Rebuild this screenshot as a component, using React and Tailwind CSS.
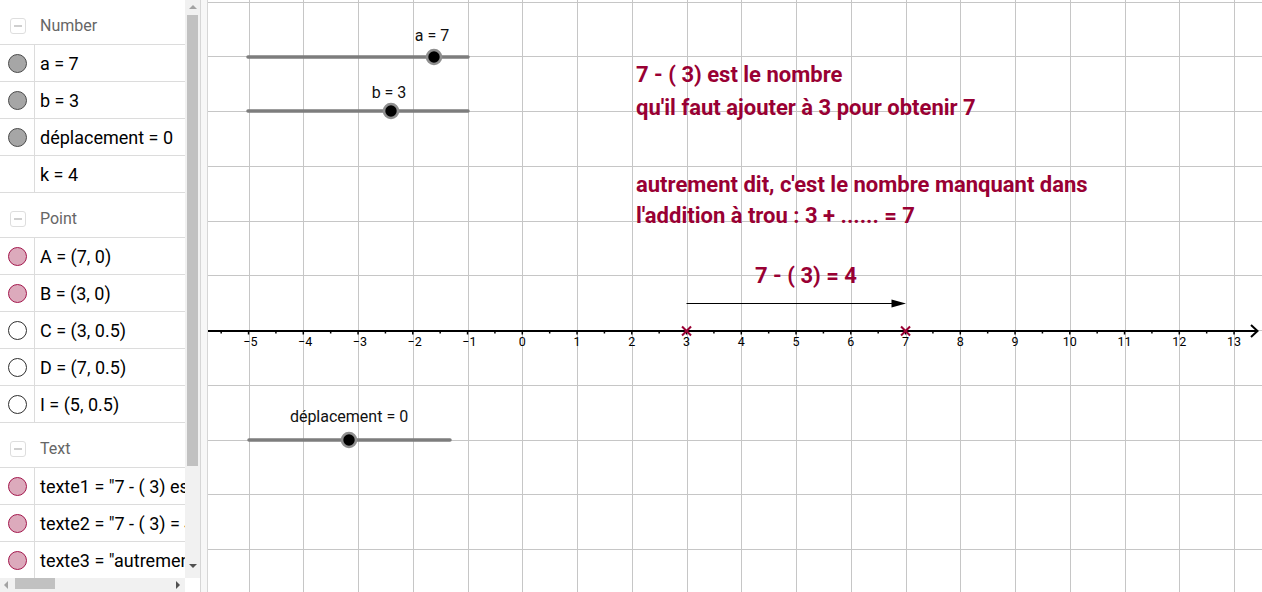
import React from 'react';

const ORIGIN_X = 522.3;
const ORIGIN_Y = 331;
const UNIT = 54.75;

const sections = [
  {
    title: 'Number',
    items: [
      { label: 'a = 7', dot: 'gray' },
      { label: 'b = 3', dot: 'gray' },
      { label: 'déplacement = 0', dot: 'gray' },
      { label: 'k = 4', dot: null },
    ],
  },
  {
    title: 'Point',
    items: [
      { label: 'A = (7, 0)', dot: 'pink' },
      { label: 'B = (3, 0)', dot: 'pink' },
      { label: 'C = (3, 0.5)', dot: 'white' },
      { label: 'D = (7, 0.5)', dot: 'white' },
      { label: 'I = (5, 0.5)', dot: 'white' },
    ],
  },
  {
    title: 'Text',
    items: [
      { label: 'texte1 = "7 - ( 3) est le nombre', dot: 'pink' },
      { label: 'texte2 = "7 - ( 3) = 4"', dot: 'pink' },
      { label: 'texte3 = "autrement dit', dot: 'pink' },
    ],
  },
];

const dotClass = {
  gray: 'bg-[#a6a6a6] border-[#4a4a4a]',
  pink: 'bg-[#dcaabc] border-[#a3174c]',
  white: 'bg-white border-[#2e2e2e]',
};

function MinusBox() {
  return (
    <div className="w-4 h-4 rounded-[3px] border border-[#dedede] flex items-center justify-center">
      <div className="w-[8px] h-[2px] bg-[#cfcfcf]" />
    </div>
  );
}

function AlgebraList() {
  return (
    <div className="w-[185px] h-[578px] overflow-hidden bg-white">
      {sections.map((s) => (
        <div key={s.title}>
          <div className="h-[45px] pt-[7px] border-b border-[#dcdcdc] flex items-center">
            <div className="w-[35px] flex justify-center pl-px">
              <MinusBox />
            </div>
            <span className="pl-[5px] text-[16px] text-[#666]">{s.title}</span>
          </div>
          {s.items.map((it) => (
            <div key={it.label} className="h-[37px] border-b border-[#dcdcdc] flex">
              <div className="w-[35px] shrink-0 border-r border-[#dcdcdc] flex items-center justify-center">
                {it.dot && <div className={`w-[19px] h-[19px] rounded-full border ${dotClass[it.dot]}`} />}
              </div>
              <div className="pl-[5px] flex items-center whitespace-nowrap text-[18px] text-black">
                {it.label}
              </div>
            </div>
          ))}
        </div>
      ))}
    </div>
  );
}

function Slider({ x1, x2, y, knob, label, labelX, labelY }) {
  return (
    <g>
      <line x1={x1} y1={y} x2={x2} y2={y} stroke="#7d7d7d" strokeWidth="3.5" strokeLinecap="round" />
      <circle cx={knob} cy={y} r="7" fill="#000" stroke="#8f8f8f" strokeWidth="2.6" />
      <text x={labelX} y={labelY} fontSize="16" fill="#111" textAnchor="middle">{label}</text>
    </g>
  );
}

function Graphics() {
  const xs = [];
  for (let k = -5; k <= 13; k++) xs.push(k);
  const ys = [];
  for (let j = -6; j <= 4; j++) ys.push(j);
  const halves = [];
  for (let k = -6; k <= 13; k++) halves.push(k + 0.5);
  const red = '#990033';

  return (
    <svg className="block" width="1054" height="592" viewBox="208 0 1054 592" style={{ fontFamily: 'Roboto, sans-serif' }}>
      {/* grid */}
      {xs.map((k) => {
        const x = Math.round(ORIGIN_X + k * UNIT) + 0.5;
        return <line key={'v' + k} x1={x} y1="0" x2={x} y2="592" stroke="#c6c6c6" strokeWidth="1" />;
      })}
      {ys.map((j) => {
        const y = Math.round(ORIGIN_Y + j * UNIT) - 0.5;
        return <line key={'h' + j} x1="208" y1={y} x2="1262" y2={y} stroke="#c6c6c6" strokeWidth="1" />;
      })}

      {/* x axis */}
      <line x1="208" y1={ORIGIN_Y} x2="1257" y2={ORIGIN_Y} stroke="#000" strokeWidth="2" />
      <polyline points="1251,325 1257.5,331 1251,337" fill="none" stroke="#000" strokeWidth="2" />
      {xs.map((k) => {
        const x = ORIGIN_X + k * UNIT;
        return <line key={'t' + k} x1={x} y1={ORIGIN_Y} x2={x} y2={ORIGIN_Y + 3.5} stroke="#000" strokeWidth="1.5" />;
      })}
      {halves.map((k) => {
        const x = ORIGIN_X + k * UNIT;
        if (x < 210 || x > 1250) return null;
        return <line key={'m' + k} x1={x} y1={ORIGIN_Y} x2={x} y2={ORIGIN_Y + 2.5} stroke="#000" strokeWidth="1.5" />;
      })}
      {xs.map((k) => {
        const x = ORIGIN_X + k * UNIT + (k < 0 ? 1.8 : 0);
        return (
          <text key={'l' + k} x={x} y="346" fontSize="12.5" fill="#000" textAnchor="middle">
            {k < 0 ? '\u2212' + -k : k}
          </text>
        );
      })}

      {/* sliders */}
      <Slider x1={248} x2={468} y={57} knob={434} label="a = 7" labelX={432} labelY={41} />
      <Slider x1={248} x2={468} y={111} knob={391} label="b = 3" labelX={389} labelY={98} />
      <Slider x1={249} x2={450} y={440} knob={349} label="déplacement = 0" labelX={349} labelY={421.5} />

      {/* vector C -> D */}
      <line x1="686.5" y1="303.5" x2="893" y2="303.5" stroke="#000" strokeWidth="1" />
      <polygon points="906,303.5 891.5,299.5 891.5,307.5" fill="#000" />

      {/* points A, B */}
      {[3, 7].map((k) => {
        const x = ORIGIN_X + k * UNIT;
        return (
          <g key={'p' + k} stroke={red} strokeWidth="2">
            <line x1={x - 4.5} y1={ORIGIN_Y - 4.5} x2={x + 4.5} y2={ORIGIN_Y + 4.5} />
            <line x1={x - 4.5} y1={ORIGIN_Y + 4.5} x2={x + 4.5} y2={ORIGIN_Y - 4.5} />
          </g>
        );
      })}

      {/* texts */}
      <g fill={red} fontSize="22" fontWeight="700">
        <text x="636" y="81.7">7 - ( 3) est le nombre</text>
        <text x="636" y="115">qu'il faut ajouter à 3 pour obtenir 7</text>
        <text x="636" y="191.7">autrement dit, c'est le nombre manquant dans</text>
        <text x="636" y="223">l'addition à trou : 3 + ...... = 7</text>
        <text x="755" y="283.3">7 - ( 3) = 4</text>
      </g>
    </svg>
  );
}

export default function App() {
  return (
    <div className="w-[1262px] h-[592px] flex overflow-hidden bg-white" style={{ fontFamily: 'Roboto, sans-serif' }}>
      {/* algebra view */}
      <div className="w-[200px] h-full flex flex-col shrink-0">
        <div className="flex h-[578px]">
          <AlgebraList />
          <div className="w-[15px] bg-[#f1f1f1] relative">
            <div className="absolute left-[4px] top-[5px] w-0 h-0 border-l-[4px] border-r-[4px] border-b-[4px] border-l-transparent border-r-transparent border-b-[#a3a3a3]" />
            <div className="absolute left-[2px] top-[15px] w-[11px] h-[451px] bg-[#c1c1c1]" />
            <div className="absolute left-[4px] top-[564px] w-0 h-0 border-l-[4px] border-r-[4px] border-t-[4px] border-l-transparent border-r-transparent border-t-[#505050]" />
          </div>
        </div>
        <div className="h-[14px] flex">
          <div className="w-[185px] bg-[#f1f1f1] relative">
            <div className="absolute left-[4px] top-[3px] w-0 h-0 border-t-[4px] border-b-[4px] border-r-[4px] border-t-transparent border-b-transparent border-r-[#a3a3a3]" />
            <div className="absolute left-[15px] top-0 w-[40px] h-[11px] bg-[#c1c1c1]" />
            <div className="absolute left-[176px] top-[3px] w-0 h-0 border-t-[4px] border-b-[4px] border-l-[4px] border-t-transparent border-b-transparent border-l-[#505050]" />
          </div>
          <div className="flex-1 bg-white" />
        </div>
      </div>

      {/* splitter */}
      <div className="w-[8px] h-full shrink-0 border-l border-r border-[#d6d6d6] bg-[#f7f7f7]" />

      {/* graphics view */}
      <div className="flex-1 h-full">
        <Graphics />
      </div>
    </div>
  );
}
